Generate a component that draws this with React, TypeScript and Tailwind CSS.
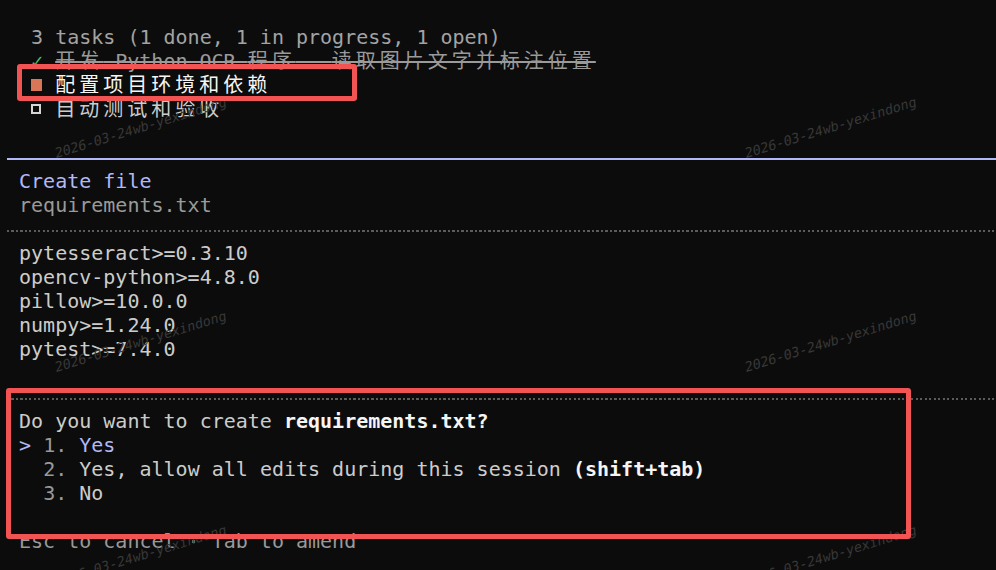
import React from "react";

const Cjk = ({ children }: { children: React.ReactNode }) => (
  <span className="tracking-[4px]">{children}</span>
);

const Row = ({ children, className = "" }: { children?: React.ReactNode; className?: string }) => (
  <div className={`h-[24px] leading-[24px] whitespace-pre ${className}`}>{children}</div>
);

const Dotted = () => (
  <div className="h-[24px] pt-[13px]">
    <div className="h-[2px] bg-[repeating-linear-gradient(90deg,#5c5c5c_0px,#5c5c5c_2px,transparent_2px,transparent_4.5px)]" />
  </div>
);

const marks = [
  { left: 57, bottom: 160 },
  { left: 747, bottom: 160 },
  { left: 57, bottom: 374 },
  { left: 747, bottom: 374 },
  { left: 57, bottom: 588 },
  { left: 747, bottom: 588 },
];

export default function App() {
  return (
    <div className="relative w-[996px] h-[570px] overflow-hidden bg-[#0c0c0c] font-['DejaVu_Sans_Mono','Noto_Sans_CJK_SC',monospace] text-[20px] leading-[24px] text-[#cccccc]">
      <div className="pt-[25px] pl-[7px]">
        <Row className="text-[#a3a3a3]">{"  3 tasks (1 done, 1 in progress, 1 open)"}</Row>
        <Row>
          {"  "}
          <span className="text-[#4eba65]">✓</span>
          {" "}
          <span className="text-[#9a9a9a] line-through decoration-[#9a9a9a]">
            <Cjk>开发</Cjk>
            {" Python OCR "}
            <Cjk>程序</Cjk>
            {" - "}
            <Cjk>读取图片文字并标注位置</Cjk>
          </span>
        </Row>
        <Row>
          {"  "}
          <span className="inline-block w-[12px] h-[24px] align-top pt-[6px]">
            <span className="block w-[11px] h-[12px] bg-[#d77757]" />
          </span>
          {" "}
          <span className="text-[#f5f5f5]">
            <Cjk>配置项目环境和依赖</Cjk>
          </span>
        </Row>
        <Row>
          {"  "}
          <span className="inline-block w-[12px] h-[24px] align-top pt-[7px]">
            <span className="block w-[10px] h-[10px] border-2 border-[#d6d6d6]" />
          </span>
          {" "}
          <span className="text-[#cccccc]">
            <Cjk>自动测试和验收</Cjk>
          </span>
        </Row>
        <Row />
        <div className="h-[24px] pt-[13px]">
          <div className="h-[2px] bg-[#b1b9f9]" />
        </div>
        <Row className="text-[#b1b9f9]">{" Create file"}</Row>
        <Row className="text-[#9a9a9a]">{" requirements.txt"}</Row>
        <Dotted />
        <Row>{" pytesseract>=0.3.10"}</Row>
        <Row>{" opencv-python>=4.8.0"}</Row>
        <Row>{" pillow>=10.0.0"}</Row>
        <Row>{" numpy>=1.24.0"}</Row>
        <Row>{" pytest>=7.4.0"}</Row>
        <Row />
        <Dotted />
        <Row>
          {" Do you want to create "}
          <span className="font-bold text-[#f5f5f5]">requirements.txt?</span>
        </Row>
        <Row>
          {" "}
          <span className="text-[#b1b9f9]">&gt;</span>
          {" "}
          <span className="text-[#999999]">1.</span>
          {" "}
          <span className="text-[#b1b9f9]">Yes</span>
        </Row>
        <Row>
          {"   "}
          <span className="text-[#999999]">2.</span>
          {" Yes, allow all edits during this session "}
          <span className="font-bold text-[#f5f5f5]">(shift+tab)</span>
        </Row>
        <Row>
          {"   "}
          <span className="text-[#999999]">3.</span>
          {" No"}
        </Row>
        <Row />
        <Row className="text-[#999999]">{" Esc to cancel · Tab to amend"}</Row>
      </div>

      {marks.map((m, i) => (
        <span
          key={i}
          className="pointer-events-none absolute h-[14px] leading-[14px] text-[13.5px] italic whitespace-nowrap text-[#383838] origin-bottom-left -rotate-[17deg]"
          style={{ left: m.left, top: m.bottom - 14 }}
        >
          2026-03-24wb-yexindong
        </span>
      ))}

      <div className="pointer-events-none absolute left-[17px] top-[64px] w-[340px] h-[37px] border-[5px] border-[#f25454] rounded-[3px]" />
      <div className="pointer-events-none absolute left-[6px] top-[388px] w-[905px] h-[151px] border-[5px] border-[#f25454] rounded-[3px]" />
    </div>
  );
}
